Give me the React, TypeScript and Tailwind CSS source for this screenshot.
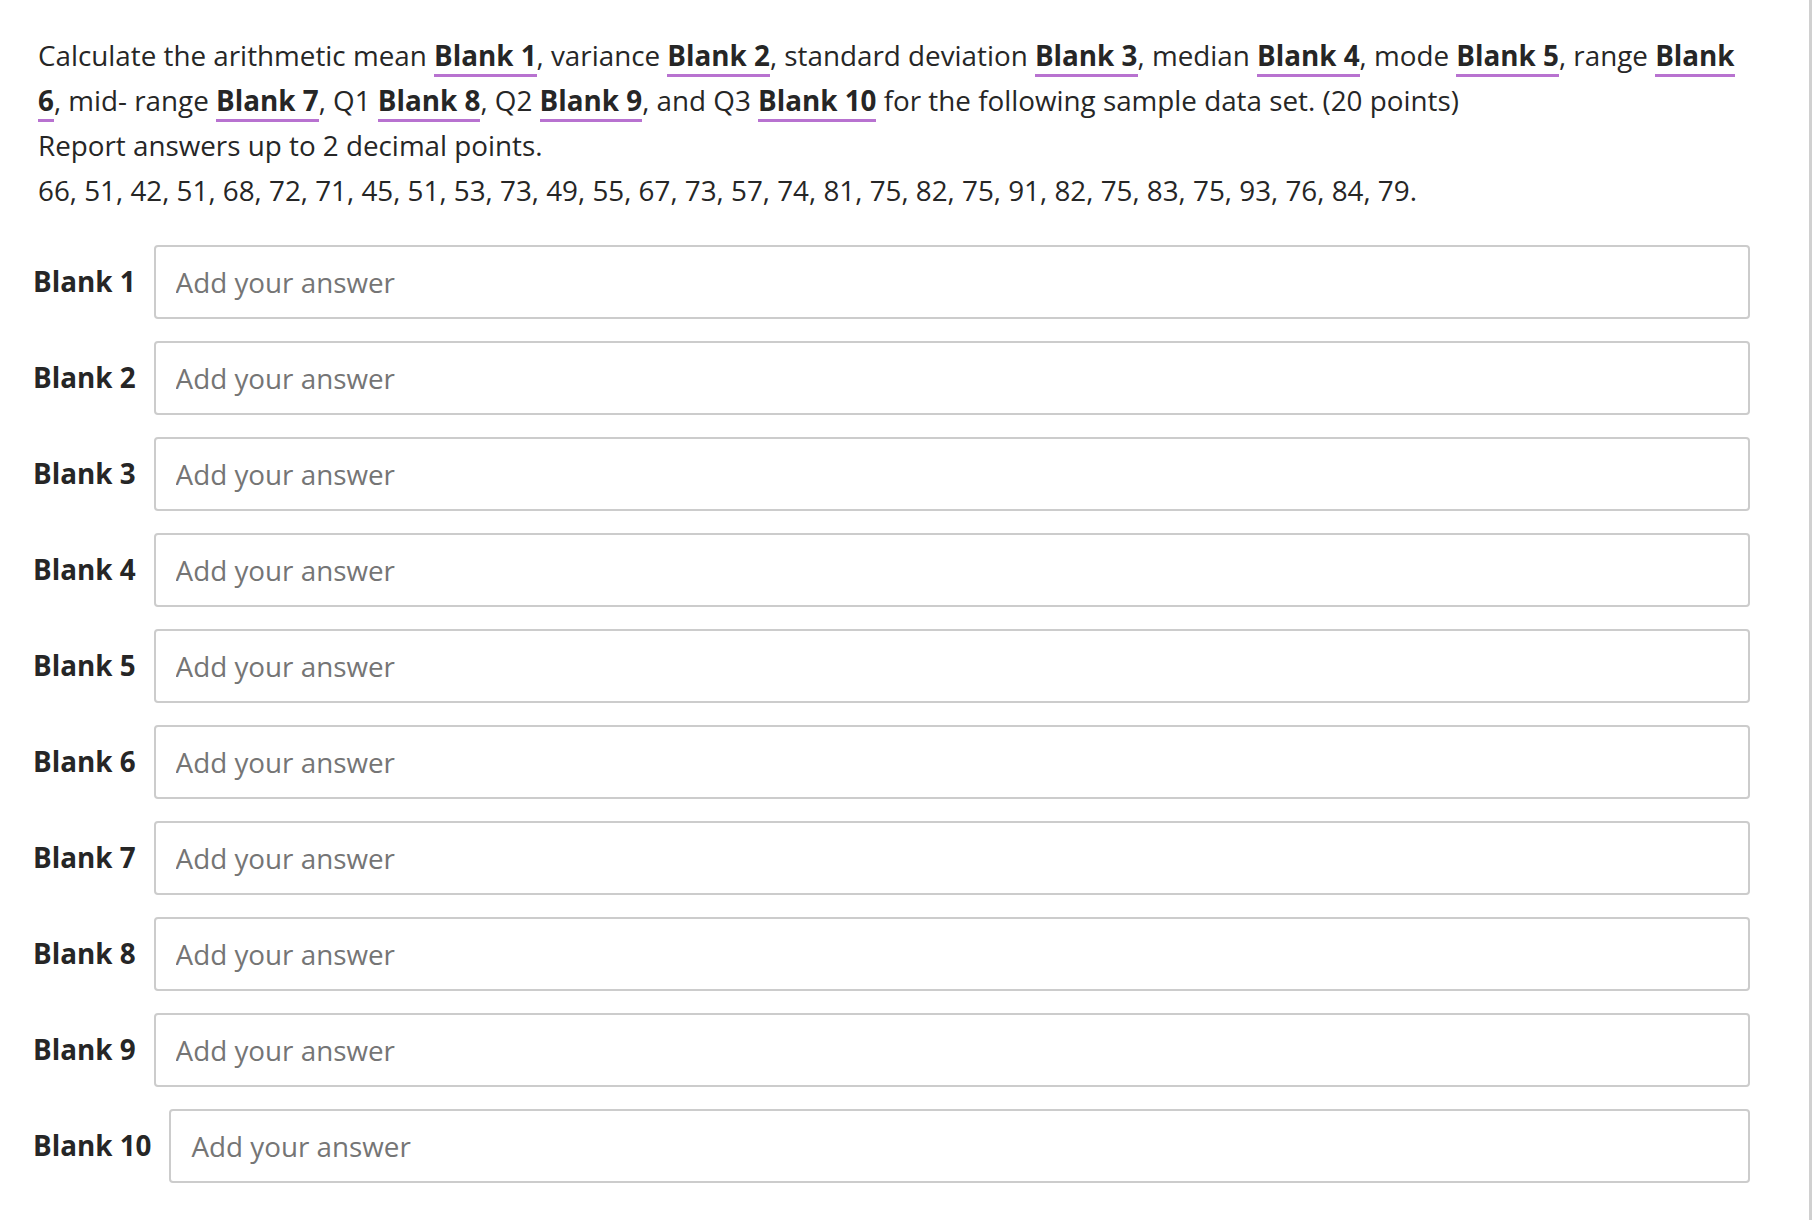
import React from "react"

const blanks = Array.from({ length: 10 }, (_, i) => i + 1)

function B({ n }: { n: number }) {
  return <strong className="font-bold border-b-[3px] border-[#b872d0]">Blank {n}</strong>
}

export default function App() {
  return (
    <div
      className="min-h-[1220px] w-full bg-white border-r-[3px] border-[#d0d0d0] pl-[33px] pr-[59px] pt-[33px] pb-8 text-[#262626]"
      style={{ fontFamily: '"Open Sans", "Noto Sans", sans-serif' }}
    >
      <div className="pl-[5px] text-[27.8px] leading-[45px]">
        <p>
          Calculate the arithmetic mean <B n={1} />, variance <B n={2} />, standard deviation <B n={3} />, median{" "}
          <B n={4} />, mode <B n={5} />, range <B n={6} />, mid- range <B n={7} />, Q1 <B n={8} />, Q2 <B n={9} />, and
          Q3 <B n={10} /> for the following sample data set. (20 points)
        </p>
        <p>Report answers up to 2 decimal points.</p>
        <p>
          66, 51, 42, 51, 68, 72, 71, 45, 51, 53, 73, 49, 55, 67, 73, 57, 74, 81, 75, 82, 75, 91, 82, 75, 83, 75, 93,
          76, 84, 79.
        </p>
      </div>

      <div className="mt-[32px] flex flex-col gap-[22px]">
        {blanks.map((n) => (
          <div key={n} className="flex items-center gap-[18px]">
            <label htmlFor={`blank-${n}`} className="shrink-0 text-[27.8px] font-bold leading-normal">
              Blank {n}
            </label>
            <input
              id={`blank-${n}`}
              type="text"
              placeholder="Add your answer"
              className="h-[74px] min-w-0 flex-1 rounded-[4px] border-2 border-[#cccccc] bg-white px-[20px] text-[27.8px] text-[#262626] outline-none placeholder:text-[#757575]"
            />
          </div>
        ))}
      </div>
    </div>
  )
}
